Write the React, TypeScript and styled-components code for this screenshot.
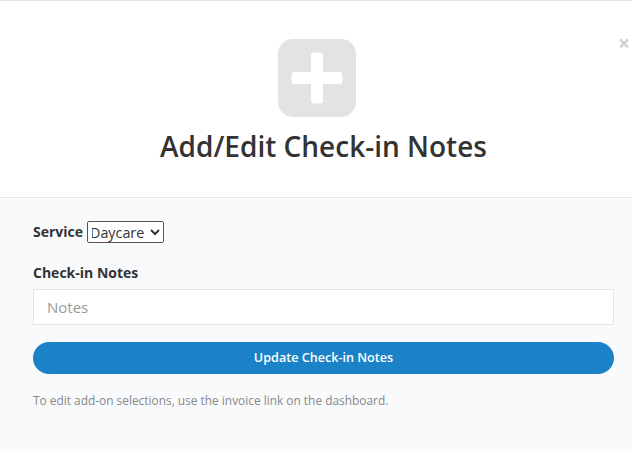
import React from "react";
import styled, { createGlobalStyle } from "styled-components";

const GlobalStyle = createGlobalStyle`
  html, body {
    margin: 0;
    padding: 0;
    background: #fff;
  }
  * {
    box-sizing: border-box;
  }
`;

function PlusIcon() {
  return (
    <svg width="78" height="78" viewBox="0 0 78 78">
      <rect width="78" height="78" rx="15" fill="#e2e3e3" />
      <rect x="33" y="13.5" width="12" height="51" rx="3" fill="#fff" />
      <rect x="13.5" y="33" width="51" height="12" rx="3" fill="#fff" />
    </svg>
  );
}

function App() {
  return (
    <Modal>
      <GlobalStyle />
      <Header>
        <Close>×</Close>
        <PlusIcon />
        <Title>Add/Edit Check-in Notes</Title>
      </Header>
      <Body>
        <ServiceRow>
          <Label>Service</Label>
          <Select defaultValue="Daycare">
            <option>Daycare</option>
            <option>Boarding</option>
          </Select>
        </ServiceRow>
        <NotesLabel>Check-in Notes</NotesLabel>
        <NotesInput placeholder="Notes" />
        <SubmitButton>Update Check-in Notes</SubmitButton>
        <Hint>To edit add-on selections, use the invoice link on the dashboard.</Hint>
      </Body>
    </Modal>
  );
}

const Modal = styled.div`
  width: 632px;
  height: 451px;
  overflow: hidden;
  display: flex;
  flex-direction: column;
  font-family: "Open Sans", sans-serif;
  border-top: 1px solid #e3e3e3;
`;

const Header = styled.div`
  position: relative;
  height: 197px;
  flex: none;
  padding: 38px 0 0 2px;
  display: flex;
  flex-direction: column;
  align-items: center;
  background: #fff;
  border-bottom: 1px solid #e3e5e8;
`;

const Close = styled.span`
  position: absolute;
  top: 28px;
  right: 2px;
  font-size: 21px;
  line-height: 28px;
  font-weight: 700;
  color: #cfcfcf;
`;

const Title = styled.h1`
  margin: 11px 0 0 13px;
  font-size: 28px;
  line-height: 36px;
  font-weight: 600;
  color: #333;
`;

const Body = styled.div`
  flex: 1;
  padding: 22px 18px 0 33px;
  background: #f9fafc;
`;

const ServiceRow = styled.div`
  display: flex;
  align-items: center;
  gap: 4px;
  height: 23px;
`;

const Label = styled.label`
  font-size: 14px;
  line-height: 20px;
  font-weight: 700;
  color: #333;
`;

const Select = styled.select`
  width: 77px;
  height: 22px;
  padding: 0;
  text-indent: -2px;
  font-family: "Open Sans", sans-serif;
  font-size: 14.3px;
  color: #333;
  background: #fff;
  border: 1px solid #555;
  border-radius: 2px;
`;

const NotesLabel = styled(Label)`
  display: block;
  margin-top: 20px;
`;

const NotesInput = styled.input`
  display: block;
  width: 100%;
  height: 36px;
  margin-top: 6px;
  padding: 0 13px;
  font-family: "Open Sans", sans-serif;
  font-size: 15px;
  color: #333;
  background: #fff;
  border: 1px solid #e3e5e8;
  outline: none;

  &::placeholder {
    color: #999;
    opacity: 1;
  }
`;

const SubmitButton = styled.button`
  display: block;
  width: 100%;
  height: 32px;
  margin-top: 17px;
  padding: 0 0 2px;
  font-family: "Open Sans", sans-serif;
  font-size: 12.6px;
  font-weight: 600;
  color: #fff;
  background: #1b82c8;
  border: none;
  border-radius: 16px;
`;

const Hint = styled.p`
  margin: 18px 0 0;
  font-size: 11.9px;
  line-height: 17px;
  color: #888;
`;

export default App;
